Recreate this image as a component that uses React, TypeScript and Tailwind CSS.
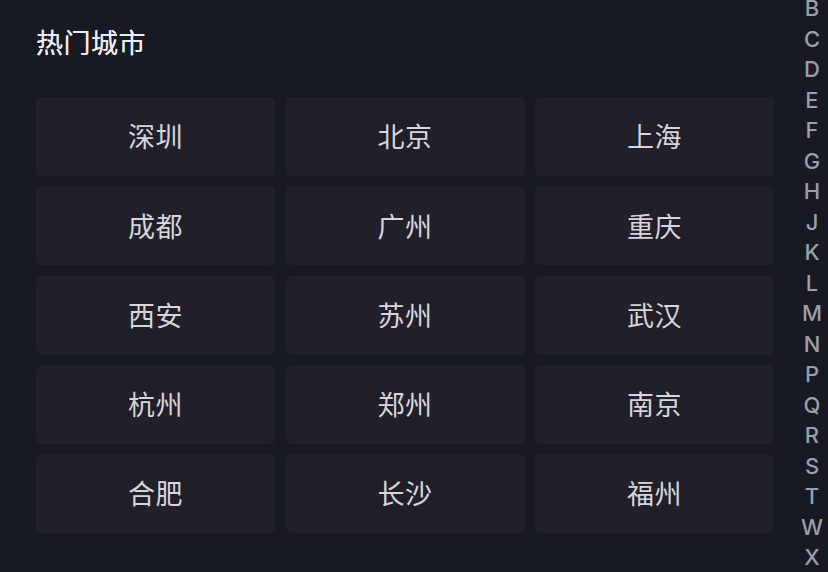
import React from "react";

const cities = [
  "深圳", "北京", "上海",
  "成都", "广州", "重庆",
  "西安", "苏州", "武汉",
  "杭州", "郑州", "南京",
  "合肥", "长沙", "福州",
];

const letters = ["B", "C", "D", "E", "F", "G", "H", "J", "K", "L", "M", "N", "P", "Q", "R", "S", "T", "W", "X"];

export default function App() {
  return (
    <div
      className="relative w-[828px] h-[572px] overflow-hidden bg-[#171923]"
      style={{ fontFamily: '"Noto Sans CJK SC", "Noto Sans", sans-serif' }}
    >
      <div className="pl-[36px] pt-[22px]">
        <h2 className="text-[27px] leading-[40px] font-normal text-[#ececef] tracking-[0.5px] [text-shadow:0_0_0.4px_#ececef]">热门城市</h2>
        <div className="mt-[35px] grid grid-cols-3 w-[738px] gap-x-[10.5px] gap-y-[10.25px]">
          {cities.map((c) => (
            <div
              key={c}
              className="h-[79px] rounded-[5px] bg-[#201f2a] flex items-center justify-center text-[27px] text-[#d6d6da] tracking-[0.5px]"
            >
              {c}
            </div>
          ))}
        </div>
      </div>
      <div
        className="absolute right-0 top-[-6.75px] w-[32px] flex flex-col items-center text-[22px] font-medium text-[#9c9ea9]"
        style={{ fontFamily: 'Inter, "Liberation Sans", sans-serif' }}
      >
        {letters.map((l) => (
          <div key={l} className="h-[30.5px] leading-[30.5px]">
            {l}
          </div>
        ))}
      </div>
    </div>
  );
}
